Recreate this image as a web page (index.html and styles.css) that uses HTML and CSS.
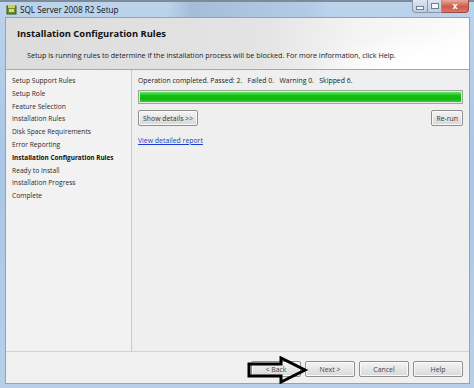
FILE: index.html
```html
<!DOCTYPE html>
<html lang="en">
<head>
  <meta charset="UTF-8" />
  <title>SQL Server 2008 R2 Setup</title>
  <link rel="stylesheet" href="styles.css">
</head>
<body>
  <div class="window">
    <!-- Title bar -->
    <div class="titlebar">
      <svg class="appicon" width="11" height="11" viewBox="0 0 11 11">
        <rect x="1" y="2" width="9" height="8" fill="#6b8f2a" stroke="#3d5a14" stroke-width="1"/>
        <rect x="2" y="1" width="7" height="3" fill="#e8c64a"/>
        <rect x="3" y="5" width="5" height="3" fill="#c9dd8a"/>
      </svg>
      <span class="title">SQL Server 2008 R2 Setup</span>
      <div class="winbtns">
        <span class="wb wb-min"><i></i></span>
        <span class="wb wb-max"><i></i></span>
        <span class="wb wb-close">x</span>
      </div>
    </div>

    <div class="client">
      <!-- Header -->
      <div class="header">
        <h1>Installation Configuration Rules</h1>
        <p>Setup is running rules to determine if the installation process will be blocked. For more information, click Help.</p>
      </div>

      <div class="content">
        <ul class="nav">
          <li>Setup Support Rules</li>
          <li>Setup Role</li>
          <li>Feature Selection</li>
          <li>Installation Rules</li>
          <li>Disk Space Requirements</li>
          <li>Error Reporting</li>
          <li class="current">Installation Configuration Rules</li>
          <li>Ready to Install</li>
          <li>Installation Progress</li>
          <li>Complete</li>
        </ul>
        <div class="main">
          <div class="status">Operation completed. Passed: 2.&nbsp;&nbsp; Failed 0.&nbsp;&nbsp; Warning 0.&nbsp;&nbsp; Skipped 6.</div>
          <div class="progress"><div class="bar"></div></div>
          <div class="row">
            <button class="btn">Show details &gt;&gt;</button>
            <button class="btn">Re-run</button>
          </div>
          <a class="report" href="#">View detailed report</a>
        </div>
      </div>

      <!-- Footer buttons -->
      <div class="footer">
        <button class="btn fbtn">&lt; Back</button>
        <button class="btn fbtn">Next &gt;</button>
        <button class="btn fbtn">Cancel</button>
        <button class="btn fbtn">Help</button>
        <svg class="arrow" width="62" height="28" viewBox="0 0 62 28">
          <polygon points="2,8 34,8 34,2 58,14 34,26 34,20 2,20" fill="none" stroke="#000" stroke-width="3" stroke-linejoin="miter"/>
        </svg>
      </div>
    </div>
  </div>
</body>
</html>
```

FILE: styles.css
```css
html, body { margin: 0; padding: 0; }
body {
  width: 474px;
  height: 388px;
  overflow: hidden;
  font-family: "Open Sans", "DejaVu Sans", sans-serif;
  color: #1e1e1e;
  background: #6d7f95;
}
.window {
  height: 388px;
  box-sizing: border-box;
  background: linear-gradient(#bcd3ec, #a9c6e6 40%, #b7cfe9);
  padding: 0 4px 4px 5px;
  display: flex;
  flex-direction: column;
  border-top: 2px solid #7c8a99;
}
/* Title bar */
.titlebar {
  height: 15px;
  display: flex;
  align-items: center;
  position: relative;
  background: linear-gradient(90deg, rgba(255,255,255,0) 35%, rgba(150,175,205,0.6) 40%, rgba(170,195,225,0.5) 65%, rgba(255,255,255,0) 70%);
}
.appicon { margin: 0 3px 0 1px; }
.title { font-size: 8.2px; color: #111; }
.winbtns {
  position: absolute;
  right: 1px;
  top: -2px;
  display: flex;
}
.wb {
  height: 13px;
  width: 15px;
  box-sizing: border-box;
  border: 1px solid #8a98aa;
  border-top: none;
  background: linear-gradient(#dde6f0, #bfcddd);
  display: flex;
  align-items: center;
  justify-content: center;
}
.wb-min { border-radius: 0 0 0 4px; border-right: none; }
.wb-min i { width: 6px; height: 2px; background: #f5f8fc; border: 1px solid #6f7f95; margin-top: 4px; }
.wb-max i { width: 6px; height: 4px; border: 1px solid #6f7f95; background: #f5f8fc; }
.wb-close {
  width: 27px;
  border-left: none;
  border-color: #9a4a40;
  border-radius: 0 0 4px 0;
  background: linear-gradient(#eaa99e, #cf5a4a 55%, #d87a66);
  color: #fff;
  font-size: 8px;
  font-weight: bold;
  font-family: "DejaVu Sans", sans-serif;
}
/* Client area */
.client {
  flex: 1;
  display: flex;
  flex-direction: column;
  background: #f0f0f0;
  border: 1px solid #8ea3bd;
}
.header {
  height: 52px;
  box-sizing: border-box;
  padding: 9px 0 0 11px;
  border-bottom: 1px solid #a7a7a7;
  background:
    radial-gradient(ellipse 220px 70px at 470px 60px, #ffffff 40%, rgba(255,255,255,0) 75%),
    linear-gradient(100deg, #dcdcdc 0%, #e4e4e4 55%, #f4f4f4 75%, #fbfbfb 100%);
}
.header h1 {
  margin: 0;
  font-size: 9.4px;
  font-weight: bold;
  color: #111;
}
.header p {
  margin: 10px 0 0 10px;
  font-size: 7.2px;
  color: #222;
}
.content {
  flex: 1;
  display: flex;
  border-bottom: 1px solid #d3d3d3;
}
.nav {
  width: 126px;
  margin: 0;
  padding: 5px 0 0 6px;
  list-style: none;
  border-right: 1px solid #c9c9c9;
  box-sizing: border-box;
  background: #f2f2f2;
}
.nav li {
  font-size: 6.7px;
  line-height: 12.8px;
  color: #2a2a2a;
}
.nav li.current { font-weight: bold; color: #111; font-size: 6.4px; }
.main {
  flex: 1;
  padding: 5px 6px 0 6px;
  background: #efefef;
}
.status {
  font-size: 6.9px;
  line-height: 12px;
  color: #222;
}
.progress {
  margin-top: 3px;
  height: 14px;
  box-sizing: border-box;
  border: 1px solid #9aa89a;
  background: #e6e6e6;
  padding: 1px;
}
.bar {
  height: 100%;
  background: linear-gradient(#6be36b, #12c412 35%, #0fb50f 70%, #3ccb3c);
}
.row {
  margin-top: 6px;
  display: flex;
  justify-content: space-between;
}
.btn {
  height: 16px;
  padding: 0 4px;
  box-sizing: border-box;
  font-family: "Open Sans", "DejaVu Sans", sans-serif;
  font-size: 6.9px;
  color: #333;
  border: 1px solid #8f8f8f;
  border-radius: 2px;
  background: linear-gradient(#f4f4f4, #e6e6e6 50%, #d8d8d8);
  box-shadow: inset 0 0 0 1px #fafafa;
}
.report {
  display: inline-block;
  margin-top: 2px;
  font-size: 6.9px;
  color: #1a3cc8;
  text-decoration: underline;
}
.footer {
  height: 31px;
  box-sizing: border-box;
  padding: 3px 6px 0 0;
  display: flex;
  justify-content: flex-end;
  align-items: center;
  gap: 4px;
  position: relative;
}
.fbtn { width: 50px; padding: 0; color: #444; }
.arrow {
  position: absolute;
  left: 241px;
  top: 4px;
}
```
